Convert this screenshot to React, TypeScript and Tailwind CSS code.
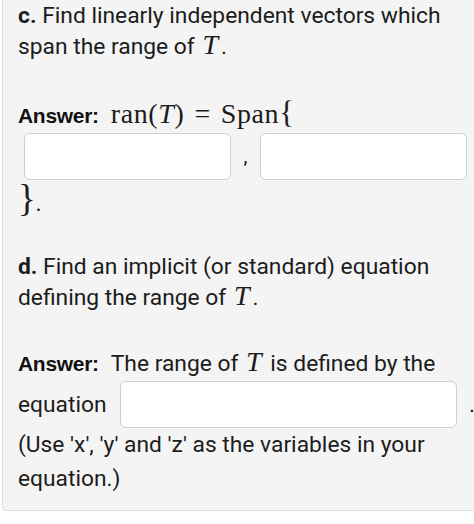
import React from "react";

const roboto = "font-['Roboto',sans-serif]";
const serif = "font-['Liberation_Serif',serif]";

function MT() {
  return <span className={`${serif} italic text-[28px] leading-none ml-[2px] mr-[3px]`}>T</span>;
}

function Ans() {
  return <span className="font-['Liberation_Sans',sans-serif] font-bold text-[21px] tracking-[-0.3px] text-[#111]">Answer:</span>;
}

function Box({ w }: { w: string }) {
  return <div className={`${w} h-[47px] bg-white border border-[#cfcfcf] rounded-[6px] shrink-0`} />;
}

export default function App() {
  return (
    <div className="w-[474px] h-[524px] bg-white overflow-hidden">
      <div className={`ml-[2px] w-[490px] h-[511px] bg-[#f4f4f4] border-l border-b border-[#dedede] rounded-bl-[4px] pl-[15px] text-[22.8px] leading-[31px] text-[#1c1c1c] ${roboto}`}>
        <p className="pt-0">
          <span className="font-bold">c.</span> Find linearly independent vectors which
          <br />
          span the range of <MT />.
        </p>
        <div className="mt-[35px] h-[31px] flex items-baseline whitespace-nowrap">
          <Ans />
          <span className={`${serif} text-[28px] tracking-[0.6px] ml-[12px]`}>
            ran(<span className="italic">T</span>)<span className="mx-[10px]">=</span>Span
            <span className="text-[31px]">{"{"}</span>
          </span>
        </div>
        <div className="mt-[5px] ml-[6px] flex items-center">
          <Box w="w-[207px]" />
          <div className="w-[29px] text-center text-[20px] leading-none pb-[2px]">,</div>
          <Box w="w-[207px]" />
        </div>
        <div className={`mt-[3px] h-[31px] ${serif} text-[37px] leading-[31px]`}>
          {"}"}<span className="text-[22px]">.</span>
        </div>
        <p className="mt-[37px]">
          <span className="font-bold">d.</span> Find an implicit (or standard) equation
          <br />
          defining the range of <MT />.
        </p>
        <div className="mt-[35px] h-[31px] flex items-baseline whitespace-nowrap">
          <Ans />
          <span className="ml-[12px]">
            The range of <MT /> is defined by the
          </span>
        </div>
        <div className="mt-[2px] flex items-center">
          <span className="w-[102px] shrink-0">equation</span>
          <Box w="w-[337px]" />
          <span className="ml-[12px]">.</span>
        </div>
        <p className="mt-[1px]">(Use 'x', 'y' and 'z' as the variables in your</p>
        <p className="mt-[3px]">equation.)</p>
      </div>
    </div>
  );
}
